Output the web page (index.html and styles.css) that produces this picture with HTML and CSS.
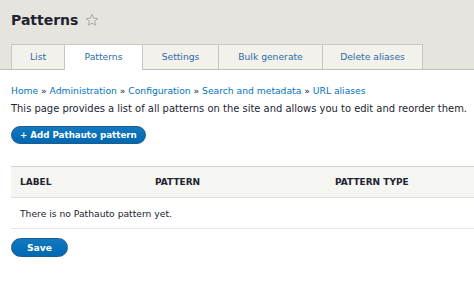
FILE: index.html
```html
<!DOCTYPE html>
<html lang="en">
<head>
  <meta charset="UTF-8">
  <title>Patterns</title>
  <link rel="stylesheet" href="styles.css">
</head>
<body>
  <header class="page-header">
    <h1 class="page-title">Patterns
      <svg class="star" width="14" height="14" viewBox="0 0 24 24"><path d="M12 2.5l2.9 6.3 6.9.7-5.2 4.6 1.5 6.8L12 17.4l-6.1 3.5 1.5-6.8-5.2-4.6 6.9-.7z" fill="none" stroke="#a7a7a2" stroke-width="1.6" stroke-linejoin="round"/></svg>
    </h1>
    <nav class="tabs">
      <a class="tab" href="#">List</a>
      <a class="tab active" href="#">Patterns</a>
      <a class="tab" href="#">Settings</a>
      <a class="tab" href="#">Bulk generate</a>
      <a class="tab" href="#">Delete aliases</a>
    </nav>
  </header>

  <main class="content">
    <div class="breadcrumb">
      <a href="#">Home</a> » <a href="#">Administration</a> » <a href="#">Configuration</a> » <a href="#">Search and metadata</a> » <a href="#">URL aliases</a>
    </div>
    <p class="intro">This page provides a list of all patterns on the site and allows you to edit and reorder them.</p>
    <a class="button small" href="#">+ Add Pathauto pattern</a>

    <table class="patterns">
      <thead>
        <tr>
          <th class="col-label">Label</th>
          <th class="col-pattern">Pattern</th>
          <th>Pattern type</th>
        </tr>
      </thead>
      <tbody>
        <tr><td colspan="3">There is no Pathauto pattern yet.</td></tr>
      </tbody>
    </table>

    <button class="button" type="submit">Save</button>
  </main>
</body>
</html>
```

FILE: styles.css
```css
body { margin: 0; font-family: "DejaVu Sans", sans-serif; font-size: 9.2px; color: #222330; background: #fff; }
a { color: #0074bd; text-decoration: none; }

.page-header { background: #e6e4df; padding: 7px 0 0 11px; border-bottom: 1px solid #bfbfba; }
.page-title { margin: 0; font-size: 14px; font-weight: bold; color: #222330; display: flex; align-items: center; gap: 7px; height: 25px; }
.star { margin-top: 1px; }

.tabs { display: flex; margin-top: 12px; margin-bottom: -1px; }
.tab { display: block; height: 24px; line-height: 24px; text-align: center; background: #f2f1eb; border: 1px solid #c8c7c0; border-bottom: none; border-right: none; font-size: 9.2px; color: #2e6ba8; }
.tab:last-child { border-right: 1px solid #c8c7c0; }
.tab:nth-child(1) { width: 52px; }
.tab:nth-child(2) { width: 77px; }
.tab:nth-child(3) { width: 75px; }
.tab:nth-child(4) { width: 103px; }
.tab:nth-child(5) { width: 99px; }
.tab.active { background: #fff; height: 25px; border-color: #c8c7c0; }

.content { padding: 13px 0 0 11px; }
.breadcrumb { line-height: 16px; color: #222330; }
.intro { margin: 2px 0 9px; line-height: 16px; font-size: 9.95px; white-space: nowrap; }

.button { display: inline-block; background: linear-gradient(#1279c1, #0068b0); color: #fff; font-family: inherit; font-weight: bold; font-size: 9.2px; border: 1px solid #1e5c90; border-radius: 10px; padding: 0 15px; height: 19px; line-height: 17px; box-sizing: border-box; cursor: pointer; }
.button.small { padding: 0 8px; height: 18px; line-height: 16px; font-size: 8.7px; }

.patterns { width: 100%; border-collapse: collapse; margin-top: 22px; }
.patterns th { background: #f5f5f2; border-top: 1px solid #d6d5cf; border-bottom: 1px solid #e0dfd9; text-align: left; text-transform: uppercase; font-size: 9px; font-weight: bold; height: 30px; padding: 0 9px; }
.patterns th.col-label { width: 117px; }
.patterns th.col-pattern { width: 162px; }
.patterns td { height: 30px; padding: 0 9px; border-bottom: 1px solid #e6e4df; }
.content > button.button { margin-top: 9px; }
```
